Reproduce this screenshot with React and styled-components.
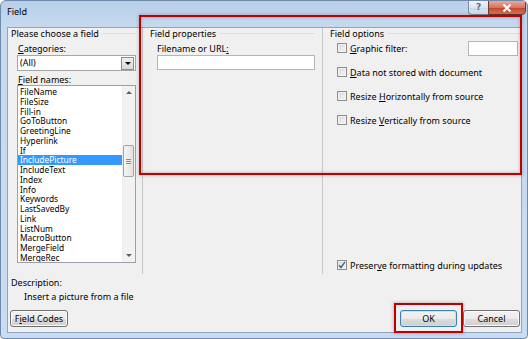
import React from 'react'
import styled, { createGlobalStyle } from 'styled-components'

const GlobalStyle = createGlobalStyle`
  html, body { margin: 0; padding: 0; background: #fff; }
  body {
    font-family: "Noto Sans", "Open Sans", sans-serif;
    font-size: 9px;
    color: #000;
  }
  * { box-sizing: border-box; }
`

const fieldNames = [
    'FileName', 'FileSize', 'Fill-in', 'GoToButton', 'GreetingLine', 'Hyperlink', 'If',
    'IncludePicture', 'IncludeText', 'Index', 'Info', 'Keywords', 'LastSavedBy', 'Link',
    'ListNum', 'MacroButton', 'MergeField', 'MergeRec',
]

const App = () => {
    return (
        <>
            <GlobalStyle />
            <Window>
                <TitleBar>
                    <TitleText>Field</TitleText>
                    <HelpButton>?</HelpButton>
                    <CloseButton>
                        <svg width="10" height="8" viewBox="0 0 10 8">
                            <path d="M1.5 0.5 L8.5 7.5 M8.5 0.5 L1.5 7.5" stroke="#fff" strokeWidth="2" />
                        </svg>
                    </CloseButton>
                </TitleBar>
                <Client>
                    <Main>
                        <LeftCol>
                            <GroupTitle>Please choose a field</GroupTitle>
                            <Label><u>C</u>ategories:</Label>
                            <ComboBox>
                                <ComboText>(All)</ComboText>
                                <ComboButton><DownArrow $size={3} $color="#000" /></ComboButton>
                            </ComboBox>
                            <Label $top={3}><u>F</u>ield names:</Label>
                            <ListBox>
                                <ListItems>
                                    {fieldNames.map(name => (
                                        <ListItem key={name} $selected={name === 'IncludePicture'}>{name}</ListItem>
                                    ))}
                                </ListItems>
                                <ScrollBar>
                                    <ScrollButton><UpArrow $size={3} $color="#5e5e5e" /></ScrollButton>
                                    <ScrollTrack>
                                        <ScrollThumb>
                                            <Grip />
                                        </ScrollThumb>
                                    </ScrollTrack>
                                    <ScrollButton><DownArrow $size={3} $color="#5e5e5e" /></ScrollButton>
                                </ScrollBar>
                            </ListBox>
                        </LeftCol>
                        <MidCol>
                            <GroupTitle>Field properties</GroupTitle>
                            <Label>Filename or URL<u>:</u></Label>
                            <TextInput $width={158} $left={7} />
                        </MidCol>
                        <RightCol>
                            <GroupTitle>Field options</GroupTitle>
                            <OptionRow $top={1}>
                                <CheckBox />
                                <span><u>G</u>raphic filter:</span>
                                <TextInput $width={50} $small />
                            </OptionRow>
                            <OptionRow>
                                <CheckBox />
                                <span><u>D</u>ata not stored with document</span>
                            </OptionRow>
                            <OptionRow>
                                <CheckBox />
                                <span>Resize <u>H</u>orizontally from source</span>
                            </OptionRow>
                            <OptionRow>
                                <CheckBox />
                                <span>Resize <u>V</u>ertically from source</span>
                            </OptionRow>
                            <OptionRow $bottom>
                                <CheckBox $checked>
                                    <svg width="8" height="8" viewBox="0 0 8 8">
                                        <path d="M1 4.2 L3 6.5 L7 0.8" fill="none" stroke="#4a5e8c" strokeWidth="1.4" />
                                    </svg>
                                </CheckBox>
                                <span>Preser<u>v</u>e formatting during updates</span>
                            </OptionRow>
                        </RightCol>
                    </Main>
                    <Footer>
                        <Description>Description:</Description>
                        <DescriptionText>Insert a picture from a file</DescriptionText>
                        <ButtonRow>
                            <Button $width={58} $push>F<u>i</u>eld Codes</Button>
                            <FocusFrame>
                                <Button $width={57} $default>OK</Button>
                            </FocusFrame>
                            <Button $width={57}>Cancel</Button>
                        </ButtonRow>
                    </Footer>
                </Client>
                <Highlight />
            </Window>
        </>
    )
}

export default App

const Window = styled.div`
    position: relative;
    width: 528px;
    height: 339px;
    display: flex;
    flex-direction: column;
    border: 1px solid #6f8aac;
    border-radius: 6px 6px 4px 4px;
    background: linear-gradient(#b8cfe9 0px, #c6d9ee 26px, #cadcf0 100%);
    overflow: hidden;
`

const TitleBar = styled.div`
    height: 26px;
    display: flex;
    align-items: flex-start;
    padding: 0 1px 0 6px;
    flex-shrink: 0;
`

const TitleText = styled.div`
    margin-top: 5px;
    line-height: 11px;
    flex: 1;
`

const HelpButton = styled.div`
    width: 20px;
    height: 15px;
    margin-top: -1px;
    border: 1px solid #7d8da2;
    border-right: none;
    border-radius: 0 0 0 4px;
    background: linear-gradient(#f0f4f9, #dbe4ef 50%, #cad7e7 51%, #dae5f1);
    color: #5d6b7e;
    font-family: "DejaVu Sans", sans-serif;
    font-weight: bold;
    font-size: 9px;
    line-height: 13px;
    text-align: center;
`

const CloseButton = styled.div`
    width: 38px;
    height: 15px;
    margin-top: -1px;
    border: 1px solid #6b3a33;
    border-radius: 0 0 4px 0;
    background: linear-gradient(#e9a99b, #d47560 50%, #c4412a 51%, #d9745b);
    display: flex;
    align-items: center;
    justify-content: center;
`

const Client = styled.div`
    flex: 1;
    margin: 0 5px 5px 6px;
    border: 1px solid #8fa5bf;
    background: #f0f0f0;
    display: flex;
    flex-direction: column;
`

const Main = styled.div`
    height: 246px;
    display: flex;
    flex-shrink: 0;
`

const Column = styled.div`
    display: flex;
    flex-direction: column;
`

const LeftCol = styled(Column)`
    width: 134px;
    padding: 0 6px 0 3px;
`

const MidCol = styled(Column)`
    width: 180px;
    padding: 0 7px;
    border-left: 1px solid #c9c9c9;
`

const RightCol = styled(Column)`
    flex: 1;
    padding: 0 1px 0 7px;
    border-left: 1px solid #c9c9c9;
`

const GroupTitle = styled.div`
    height: 11px;
    line-height: 11px;
    display: flex;
    align-items: center;
    gap: 4px;
    white-space: nowrap;
    &::after {
        content: '';
        flex: 1;
        height: 1px;
        background: #d5dfe5;
    }
`

const Label = styled.div`
    margin: ${p => p.$top ?? 4}px 0 0 7px;
    line-height: 11px;
`

const ComboBox = styled.div`
    margin: 1px 0 0 6px;
    width: 119px;
    height: 16px;
    display: flex;
    align-items: center;
    border: 1px solid #a6a6a6;
    background: #fff;
`

const ComboText = styled.div`
    flex: 1;
    padding-left: 2px;
    line-height: 12px;
`

const ComboButton = styled.div`
    width: 13px;
    height: 13px;
    margin-right: 1px;
    border: 1px solid #8c8c8c;
    background: linear-gradient(#eeeeee, #d9d9d9);
    display: flex;
    align-items: center;
    justify-content: center;
`

const DownArrow = styled.div`
    width: 0;
    height: 0;
    border-left: ${p => p.$size}px solid transparent;
    border-right: ${p => p.$size}px solid transparent;
    border-top: ${p => p.$size}px solid ${p => p.$color};
`

const UpArrow = styled.div`
    width: 0;
    height: 0;
    border-left: ${p => p.$size}px solid transparent;
    border-right: ${p => p.$size}px solid transparent;
    border-bottom: ${p => p.$size}px solid ${p => p.$color};
`

const ListBox = styled.div`
    margin-left: 6px;
    width: 119px;
    height: 178px;
    display: flex;
    border: 1px solid #9a9fa8;
    background: #fff;
`

const ListItems = styled.div`
    flex: 1;
    padding-top: 1px;
    overflow: hidden;
`

const ListItem = styled.div`
    height: 9.75px;
    line-height: 9.75px;
    font-size: 8.4px;
    padding-left: 2px;
    white-space: nowrap;
    background: ${p => (p.$selected ? '#3399ff' : 'transparent')};
    color: ${p => (p.$selected ? '#fff' : '#000')};
`

const ScrollBar = styled.div`
    width: 13px;
    display: flex;
    flex-direction: column;
    background: #f2f2f2;
    border-left: 1px solid #ececec;
`

const ScrollButton = styled.div`
    height: 13px;
    display: flex;
    align-items: center;
    justify-content: center;
`

const ScrollTrack = styled.div`
    flex: 1;
    padding-top: 46px;
`

const ScrollThumb = styled.div`
    height: 32px;
    margin: 0 1px 0 0;
    border: 1px solid #a3a3a3;
    border-radius: 2px;
    background: linear-gradient(90deg, #f5f5f5, #e2e2e2);
    display: flex;
    align-items: center;
    justify-content: center;
`

const Grip = styled.div`
    width: 5px;
    height: 5px;
    border-top: 1px solid #8a8a8a;
    border-bottom: 1px solid #8a8a8a;
    position: relative;
    &::after {
        content: '';
        position: absolute;
        left: 0;
        right: 0;
        top: 1px;
        height: 1px;
        background: #8a8a8a;
    }
`

const TextInput = styled.div`
    width: ${p => p.$width}px;
    height: 15px;
    margin: ${p => (p.$small ? '0 2px 0 auto' : `1px 0 0 ${p.$left}px`)};
    border: 1px solid #b3b5ba;
    background: #fff;
`

const OptionRow = styled.div`
    height: 16px;
    display: flex;
    align-items: center;
    gap: 3px;
    margin: ${p => (p.$bottom ? 'auto 0 1px 7px' : `${p.$top ?? 8}px 0 0 7px`)};
    white-space: nowrap;
    line-height: 11px;
`

const CheckBox = styled.div`
    width: 10px;
    height: 10px;
    flex-shrink: 0;
    border: 1px solid #8e8f8f;
    background: linear-gradient(135deg, #d6d6d6, #fbfbfb);
    box-shadow: inset 0 0 0 1px #f0f0f0;
    display: flex;
    align-items: center;
    justify-content: center;
`

const Footer = styled.div`
    flex: 1;
    padding: 3px 1px 0 2px;
    display: flex;
    flex-direction: column;
`

const Description = styled.div`
    line-height: 11px;
    padding-left: 1px;
`

const DescriptionText = styled.div`
    line-height: 11px;
    margin: 3px 0 0 14px;
`

const ButtonRow = styled.div`
    margin-top: 8px;
    display: flex;
    gap: 6px;
`

const Button = styled.div`
    width: ${p => p.$width}px;
    height: 17px;
    margin-right: ${p => (p.$push ? 'auto' : '0')};
    border: 1px solid ${p => (p.$default ? '#3c7fb1' : '#707070')};
    border-radius: 3px;
    background: linear-gradient(#f2f2f2 0%, #ebebeb 50%, #dddddd 51%, #cfcfcf 100%);
    box-shadow: inset 0 0 0 1px ${p => (p.$default ? '#bfe3f7' : '#fbfbfb')};
    display: flex;
    align-items: center;
    justify-content: center;
    line-height: 11px;
`

const FocusFrame = styled.div`
    margin: -7px -6px -6px;
    padding: 5px 4px 4px;
    border: 2px solid #c00000;
    box-shadow: 0 0 3px 1px rgba(0, 0, 0, 0.18);
`

const Highlight = styled.div`
    position: absolute;
    left: 138px;
    top: 14px;
    width: 383px;
    height: 160px;
    border: 2px solid #c00000;
    box-shadow: 0 0 3px 1px rgba(0, 0, 0, 0.16), inset 0 0 3px 1px rgba(0, 0, 0, 0.16);
    pointer-events: none;
`
